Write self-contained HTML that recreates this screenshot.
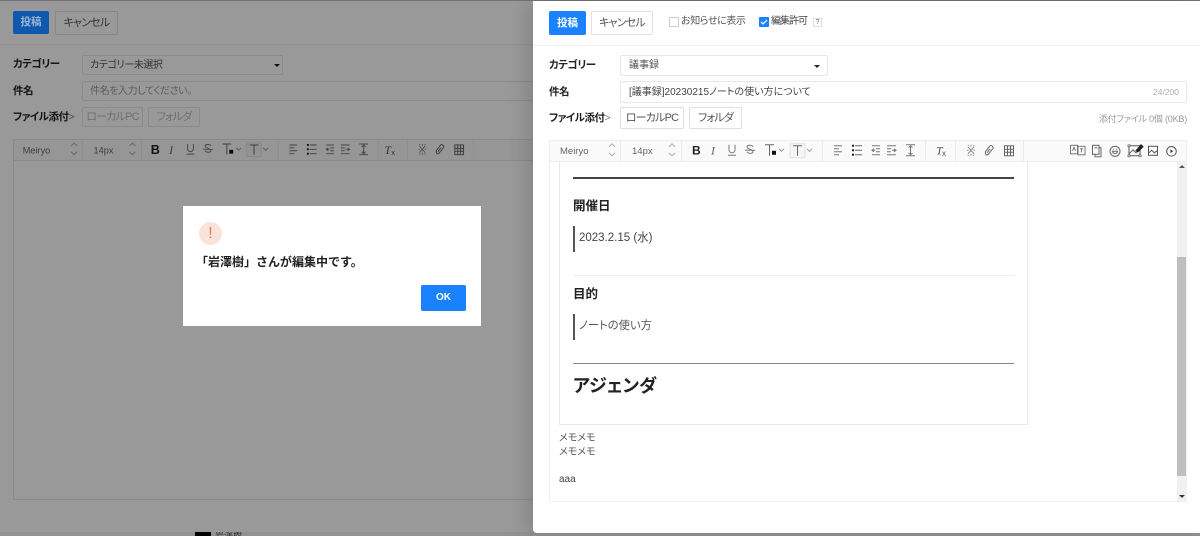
<!DOCTYPE html>
<html lang="ja"><head><meta charset="utf-8"><title>投稿</title>
<style>
html,body{margin:0;padding:0;width:1200px;height:536px;overflow:hidden;background:#fff}
body{position:relative;font-family:"Liberation Sans","Noto Sans CJK JP",sans-serif;color:#333;font-size:11px;font-feature-settings:"palt"}
#root{position:absolute;left:0;top:0;width:1200px;height:536px;overflow:hidden;filter:blur(.3px)}
.a{position:absolute;white-space:nowrap;box-sizing:border-box}
.lb{font-weight:700;color:#222;font-size:10.500px;line-height:14px;letter-spacing:-.5px}
.box{border:1px solid #e8e8e8;border-radius:2px;background:#fff;line-height:20px}
.btn{border:1px solid #e0e0e0;border-radius:2px;background:#fff;text-align:center;color:#555;font-size:11px;letter-spacing:-.8px}
.blue{background:#1a82ff;color:#fff;font-weight:700;border-radius:2px;text-align:center}
svg text{font-family:"Liberation Sans","Noto Sans CJK JP",sans-serif}
</style></head><body>

<svg width="0" height="0" style="position:absolute"><defs>
<g id="tb" fill="none" stroke="#555" stroke-width="1">
<g stroke="#ececec"><path d="M71.500 0V22M132.500 0V22M273.500 0V22M376.500 0V22M406.500 0V22M474.500 0V22"/></g>
<g transform="translate(0 -1.200)">
<path d="M60 8l3-3 3 3M60 14l3 3 3-3M120 8l3-3 3 3M120 14l3 3 3-3" stroke="#aaa"/>
<path d="M180 6V11a3 3 0 0 0 6 0V6M179 16.500H187" stroke="#777"/>
<path d="M196 11.500H206M204 8c-1-2-6-2-6 0 0 3 6 2 6 5 0 2-5 2-6 0" stroke="#777"/>
<path d="M216 6H225M220.500 6V17" stroke="#666"/><rect x="223" y="12" width="4" height="4" fill="#111" stroke="none"/><path d="M230 10l2.500 2.500L235 10" stroke="#999"/>
<rect x="241" y="5" width="15" height="14" stroke="#e3e3e3" fill="#f5f5f5"/><path d="M244 7H253M248.500 7V17" stroke="#666"/><path d="M258 10l2.500 2.500L263 10" stroke="#999"/>
<path d="M285 7H293M285 10H290M285 13H293M285 16H290" stroke="#777"/>
<path d="M306 7H313M306 11.500H313M306 16H313" stroke="#666"/><path d="M303 7H305M303 11.500H305M303 16H305" stroke="#222" stroke-width="2"/>
<path d="M323 7H331M327 10H331M327 13H331M323 16H331M323 11.500H326M325 10l-2 1.500 2 1.500" stroke="#777"/>
<path d="M338 7H347M338 10H342M338 13H342M338 16H347M343 11.500H347M345 10l2 1.500-2 1.500" stroke="#777"/>
<path d="M357 6H366M357 17H366M361.500 7V16M359.500 9l2-2 2 2M359.500 14l2 2 2-2" stroke="#777"/>
<path d="M419 8l6 7M425 8l-6 7M422 6V8M422 15v2M418 11.500h1.500M424.500 11.500h1.500M419 6l.5 1M425 6l-.5 1M419 17l.5-1M425 17l-.5-1" stroke="#888"/>
<path d="M437 16c-1-1-1-3 0-4l4-5c1-1 4 1 3 2.500l-4 5c-1 1.500-2 2-3 1.500zM441 10l-3 4" stroke="#666"/>
<rect x="455.500" y="7" width="9" height="10" stroke="#666"/><path d="M455.500 10.500H464.500M455.500 13.500H464.500M458.500 7V17M461.500 7V17" stroke="#666"/>
<rect x="521.500" y="6.500" width="7" height="8.500" stroke="#777"/><rect x="529" y="7.500" width="7" height="8.500" stroke="#777"/><path d="M523.500 12l1.500-3.500 1.500 3.500M531 10h3M532.500 10v3.500" stroke="#777"/>
<rect x="543.500" y="6.500" width="6.500" height="9" stroke="#666"/><path d="M546 15.500v2.500h6V9h-2" stroke="#666"/><path d="M545.500 9h3" stroke="#666"/>
<circle cx="566" cy="12.500" r="5" stroke="#666"/><path d="M563.500 12.500c.5 3 4.500 3 5 0zM564.500 10v1M567.500 10v1" stroke="#666"/>
<path d="M580 7H591V17H580ZM580 15l4-4 3 3 3-3" stroke="#555"/><path d="M587 12l5-6 2 2-5 5z" fill="#222" stroke="#222"/><path d="M579 6h2v2h-2zM579 16h2v2h-2zM590 16h2v2h-2z" fill="#fff" stroke="#555" stroke-width=".7"/>
<rect x="599.500" y="7.500" width="9" height="9" stroke="#555"/><path d="M600 14l2.500-2.500 3 2.500 2.500-2" stroke="#555"/>
<circle cx="622.500" cy="12.500" r="4.800" stroke="#555"/><path d="M621.500 10.500l2.500 2-2.500 2z" fill="#333" stroke="none"/>
</g></g></defs></svg>

<div id="root">
<!-- background page -->
<div class="a" style="left:0;top:0;width:1200px;height:536px;overflow:hidden">
<div class="a btn" style="left:55px;top:11px;width:63px;height:24px;line-height:22px">キャンセル</div>
<div class="a" style="left:0;top:44px;width:533px;height:1px;background:#eee"></div>
<div class="a lb" style="left:13px;top:57px">カテゴリー</div>
<div class="a box" style="left:82px;top:55px;width:201px;height:20px;padding-left:7px;color:#555;font-size:10px;letter-spacing:-.4px">カテゴリー未選択<span class="a" style="left:191px;top:8px;border:3px solid transparent;border-top:3px solid #222;border-bottom:0"></span></div>
<div class="a lb" style="left:13px;top:84px">件名</div>
<div class="a box" style="left:82px;top:81px;width:470px;height:20px;padding-left:7px;color:#999;font-size:10px;letter-spacing:-.4px">件名を入力してください。</div>
<div class="a lb" style="left:13px;top:110px">ファイル添付<span style="font-weight:400;color:#777">&gt;</span></div>
<div class="a btn" style="left:82px;top:107px;width:61px;height:20px;line-height:18px;color:#bbb;border-color:#e8e8e8">ローカルPC</div>
<div class="a btn" style="left:148px;top:107px;width:52px;height:20px;line-height:18px;color:#bbb;border-color:#e8e8e8">フォルダ</div>
<div class="a" style="left:13px;top:139px;width:540px;height:361px;border:1px solid #e6e6e6"></div>
<div class="a" style="left:14px;top:140px;width:540px;height:21px;background:#fafafa;border-bottom:1px solid #e6e6e6"></div>
<svg class="a" style="left:13px;top:139px" width="485" height="22" viewBox="0 0 500 22"><use href="#tb"/><text x="10" y="14.500" font-size="9.500" fill="#666">Meiryo</text><text x="83" y="14.500" font-size="9.500" fill="#666">14px</text><text x="142" y="15" font-size="13" font-weight="700" fill="#222">B</text><text x="161" y="15" font-size="12" font-style="italic" fill="#666" style="font-family:'Liberation Serif'">I</text><text x="383" y="15" font-size="12" font-style="italic" fill="#555" style="font-family:'Liberation Serif'">T</text><text x="390" y="16" font-size="8" fill="#555">x</text></svg>
<div class="a" style="left:0;top:532px;width:1200px;height:4px;overflow:hidden;background:#f4f4f4"><span class="a" style="left:195px;top:0;width:16px;height:4px;background:#000"></span><span class="a" style="left:215px;top:-1px;font-size:9px;line-height:10px;color:#555">岩澤樹</span></div>
</div>

<!-- overlay -->
<div class="a" style="left:0;top:0;width:1200px;height:536px;background:rgba(0,0,0,.4)"></div>
<div class="a" style="left:0;top:0;width:1200px;height:1px;background:rgba(0,0,0,.25)"></div>
<div class="a" style="left:13px;top:11px;width:36px;height:23px;line-height:23px;font-size:10.500px;font-weight:700;text-align:center;border-radius:2px;background:#1058ae;color:#9eb6d4">投稿</div>

<!-- dialog -->
<div class="a" style="left:183px;top:206px;width:298px;height:120px;background:#fff">
<div class="a" style="left:16px;top:16px;width:23px;height:23px;border-radius:50%;background:#fbe3da;color:#d9785f;text-align:center;line-height:23px;font-size:16px">!</div>
<div class="a" style="left:13px;top:47px;font-size:12px;font-weight:700;line-height:18px;color:#222;font-feature-settings:normal">「岩澤樹」さんが編集中です。</div>
<div class="a blue" style="left:238px;top:79px;width:45px;height:26px;line-height:26px;font-size:10px">OK</div>
</div>

<!-- right panel -->
<div class="a" style="left:533px;top:1px;width:667px;height:532px;background:#fff;border-bottom-left-radius:4px;box-shadow:-8px 0 18px rgba(0,0,0,.13)">
<div class="a blue" style="left:16px;top:10px;width:37px;height:24px;line-height:24px;font-size:10.500px">投稿</div>
<div class="a btn" style="left:58px;top:10px;width:62px;height:24px;line-height:22px">キャンセル</div>
<div class="a" style="left:136px;top:16px;width:10px;height:10px;border:1px solid #ccc;border-radius:1px"></div>
<div class="a" style="left:148px;top:14px;font-size:10px;line-height:14px;color:#555;letter-spacing:-.4px">お知らせに表示</div>
<div class="a" style="left:226px;top:16px;width:10px;height:10px;background:#1a82ff;border-radius:1px"><svg style="position:absolute;left:0;top:0" width="10" height="10"><path d="M2 5l2 2 4-4" fill="none" stroke="#fff" stroke-width="1.300"/></svg></div>
<div class="a" style="left:238px;top:14px;font-size:10px;line-height:14px;color:#444;letter-spacing:-1px">編集許可</div>
<div class="a" style="left:280px;top:17px;width:9px;height:9px;border:1px solid #ddd;font-size:7px;line-height:8px;text-align:center;color:#666">?</div>
<div class="a" style="left:0;top:44px;width:667px;height:1px;background:#f0f0f0"></div>

<div class="a lb" style="left:16px;top:57px">カテゴリー</div>
<div class="a box" style="left:87px;top:54px;width:208px;height:21px;padding-left:8px;color:#555;font-size:10px">議事録<span class="a" style="left:193px;top:9px;border:3px solid transparent;border-top:3px solid #222;border-bottom:0"></span></div>
<div class="a lb" style="left:16px;top:84px">件名</div>
<div class="a box" style="left:87px;top:80px;width:567px;height:22px;padding-left:8px;color:#444;font-size:10px;line-height:21px">[議事録]20230215ノートの使い方について<span class="a" style="right:7px;top:0;font-size:8.500px;color:#aaa">24/200</span></div>
<div class="a lb" style="left:16px;top:110px">ファイル添付<span style="font-weight:400;color:#777">&gt;</span></div>
<div class="a btn" style="left:87px;top:106px;width:64px;height:22px;line-height:20px">ローカルPC</div>
<div class="a btn" style="left:156px;top:106px;width:53px;height:22px;line-height:20px">フォルダ</div>
<div class="a" style="right:13px;top:112px;font-size:9px;line-height:12px;color:#999;letter-spacing:-.2px">添付ファイル 0個 (0KB)</div>

<div class="a" style="left:16px;top:139px;width:638px;height:362px;border:1px solid #eee"></div>
<div class="a" style="left:16px;top:139px;width:638px;height:22px;background:#fafafa;border:1px solid #eee"></div>
<svg class="a" style="left:16px;top:139px" width="638" height="22" viewBox="0 0 638 22"><use href="#tb"/><text x="11" y="14" font-size="9.500" fill="#666">Meiryo</text><text x="83" y="14" font-size="9.500" fill="#666">14px</text><text x="143" y="14.500" font-size="12" font-weight="700" fill="#222">B</text><text x="162" y="14.500" font-size="12" font-style="italic" fill="#666" style="font-family:'Liberation Serif'">I</text><text x="387" y="14.500" font-size="12" font-style="italic" fill="#555" style="font-family:'Liberation Serif'">T</text><text x="393" y="16" font-size="8" fill="#555">x</text></svg>

<!-- editor contents -->
<div class="a" style="left:26px;top:161px;width:469px;height:263px;border:1px solid #e9e9e9;border-top:0"></div>
<div class="a" style="left:40px;top:176px;width:441px;height:2px;background:#444"></div>
<div class="a" style="left:40px;top:197px;font-size:12.500px;font-weight:700;line-height:16px;color:#222">開催日</div>
<div class="a" style="left:40px;top:225px;width:2px;height:26px;background:#555"></div>
<div class="a" style="left:46px;top:229px;font-size:11.500px;line-height:16px;color:#444">2023.2.15 (水)</div>
<div class="a" style="left:40px;top:274px;width:441px;height:1px;background:#eee"></div>
<div class="a" style="left:40px;top:285px;font-size:12.500px;font-weight:700;line-height:16px;color:#222">目的</div>
<div class="a" style="left:40px;top:313px;width:2px;height:26px;background:#555"></div>
<div class="a" style="left:46px;top:317px;font-size:11.300px;line-height:16px;color:#555">ノートの使い方</div>
<div class="a" style="left:40px;top:362px;width:441px;height:1px;background:#888"></div>
<div class="a" style="left:40px;top:373px;font-size:18px;font-weight:700;line-height:24px;color:#222">アジェンダ</div>
<div class="a" style="left:26px;top:431px;font-size:10px;line-height:14px;color:#555">メモメモ<br>メモメモ</div>
<div class="a" style="left:26px;top:472px;font-size:10px;line-height:14px;color:#444">aaa</div>

<!-- scrollbar -->
<div class="a" style="left:644px;top:161px;width:10px;height:339px;background:#f1f1f1"></div>
<div class="a" style="left:644px;top:256px;width:9px;height:219px;background:#bebebe"></div>
<div class="a" style="left:646px;top:164px;border:3px solid transparent;border-bottom:3px solid #555;border-top:0"></div>
<div class="a" style="left:646px;top:494px;border:3px solid transparent;border-top:3px solid #333;border-bottom:0"></div>
</div>
</div>
</body></html>
